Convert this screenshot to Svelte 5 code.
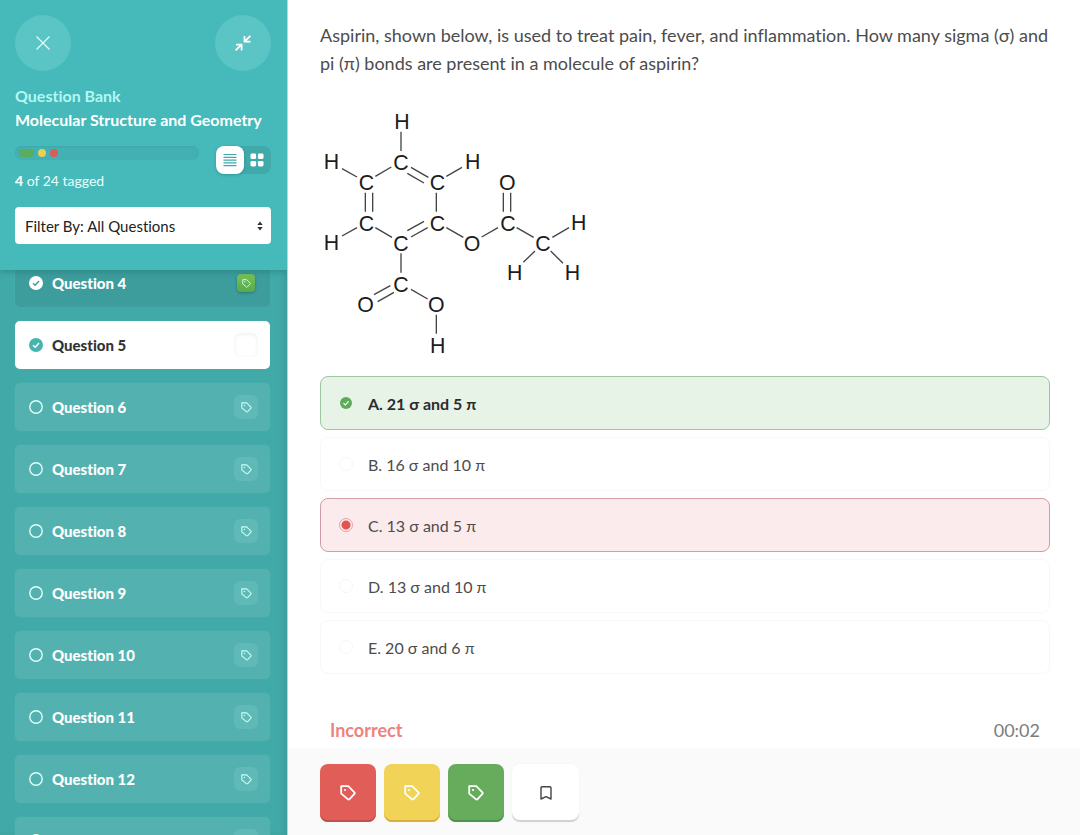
<script>
  const questions = [
    { num: 4, status: "done", tag: "green" },
    { num: 5, status: "current", tag: "blank" },
    { num: 6 },
    { num: 7 },
    { num: 8 },
    { num: 9 },
    { num: 10 },
    { num: 11 },
    { num: 12 },
    { num: 13 }
  ];

  const options = [
    { key: "A", text: "21 σ and 5 π", result: "correct" },
    { key: "B", text: "16 σ and 10 π" },
    { key: "C", text: "13 σ and 5 π", result: "wrong" },
    { key: "D", text: "13 σ and 10 π" },
    { key: "E", text: "20 σ and 6 π" }
  ];

  // [symbol, center x, baseline y]
  const atoms = [
    ["H", 276, 87], ["C", 273, 210], ["H", 64, 207], ["C", 169, 270],
    ["C", 382, 270], ["H", 488, 207], ["O", 592, 270], ["C", 169, 392],
    ["C", 382, 392], ["C", 273, 454], ["H", 64, 451], ["O", 486, 454],
    ["C", 594, 392], ["C", 699, 454], ["H", 806, 391], ["H", 614, 539],
    ["H", 787, 539], ["C", 273, 575], ["O", 167, 636], ["O", 379, 636],
    ["H", 383, 758]
  ];

  // [x1, y1, x2, y2]
  const bonds = [
    [273, 95, 273, 153], [96, 206, 141, 231], [196, 229, 244, 201],
    [303, 202, 355, 232], [292, 220, 342, 249], [409, 229, 456, 202],
    [166, 278, 166, 335], [188, 278, 188, 335], [379, 278, 379, 335],
    [96, 408, 141, 383], [196, 383, 246, 412], [303, 411, 353, 383],
    [292, 392, 342, 364], [409, 383, 460, 412], [515, 411, 564, 383],
    [580, 278, 580, 335], [602, 278, 602, 335], [620, 383, 671, 412],
    [727, 412, 777, 383], [675, 453, 640, 487], [722, 453, 759, 490],
    [273, 460, 273, 518], [192, 584, 241, 557], [203, 605, 252, 577],
    [303, 568, 353, 597], [379, 644, 379, 701]
  ];

  const tagColors = ["red", "yellow", "green"];

  let picked = $state("C");
  let view = $state("list");
</script>

{#snippet tagIcon()}
  <svg class="tag-icon" viewBox="0 0 16 16" aria-hidden="true">
    <path d="M1.2 1.2 H8.3 L14.4 7.3 Q15.2 8.1 14.4 8.9 L9.6 14.1 Q8.7 14.9 7.8 14.1 L1.2 8.6 Z" stroke-linejoin="round" />
    <circle cx="5" cy="5" r="1.1" />
  </svg>
{/snippet}

{#snippet checkIcon()}
  <svg class="check-icon" viewBox="0 0 14 14" aria-hidden="true">
    <circle cx="7" cy="7" r="7" />
    <path d="M4 7.2 L6.2 9.3 L10 5" />
  </svg>
{/snippet}

<div class="app">
  <aside class="sidebar">
    <header class="side-head">
      <div class="top-buttons">
        <button class="round" aria-label="Close">
          <svg width="16" height="16" viewBox="0 0 16 16">
            <path d="M1.5 1.5 L14.5 14.5 M14.5 1.5 L1.5 14.5" stroke="#e2fffb" stroke-width="1.2" />
          </svg>
        </button>
        <button class="round" aria-label="Collapse">
          <svg width="16" height="16" viewBox="0 0 16 16" fill="none" stroke="#fff" stroke-width="1.8">
            <path d="M15.4 0.9 L10.4 5.7 M9.5 1 V6.7 H15.5" />
            <path d="M0.6 15.4 L5.6 10.4 M1 9.6 H6.6 V15.6" />
          </svg>
        </button>
      </div>

      <p class="bank">Question Bank</p>
      <h1>Molecular Structure and Geometry</h1>

      <div class="progress-row">
        <div class="progress">
          <div class="track">
            <span class="seg green"></span>
            <span class="seg yellow"></span>
            <span class="seg red"></span>
          </div>
          <p><strong>4</strong> of 24 tagged</p>
        </div>
        <div class="toggle">
          <button class:active={view === "list"} aria-label="List view" onclick={() => (view = "list")}>
            <svg width="14" height="14" viewBox="0 0 14 14" stroke="currentColor" stroke-width="1.2">
              <path d="M0.5 1.5 H13.5 M0.5 4.3 H13.5 M0.5 7.1 H13.5 M0.5 9.9 H13.5 M0.5 12.7 H13.5" />
            </svg>
          </button>
          <button class:active={view === "grid"} aria-label="Grid view" onclick={() => (view = "grid")}>
            <svg width="14" height="14" viewBox="0 0 14 14" fill="currentColor">
              <rect x="0.5" y="0.5" width="5.6" height="5.6" rx="1.4" />
              <rect x="7.9" y="0.5" width="5.6" height="5.6" rx="1.4" />
              <rect x="0.5" y="7.9" width="5.6" height="5.6" rx="1.4" />
              <rect x="7.9" y="7.9" width="5.6" height="5.6" rx="1.4" />
            </svg>
          </button>
        </div>
      </div>

      <div class="filter">
        <select aria-label="Filter questions">
          <option>Filter By: All Questions</option>
          <option>Filter By: Tagged</option>
        </select>
        <svg width="6" height="10" viewBox="0 0 6 10" aria-hidden="true">
          <path d="M3 0.5 L5.7 4 H0.3 Z M3 9.5 L0.3 6 H5.7 Z" fill="#333" />
        </svg>
      </div>
    </header>

    <ul class="list">
      {#each questions as q (q.num)}
        <li class={q.status ?? "todo"}>
          <button class="question">
            {#if q.status}
              {@render checkIcon()}
            {:else}
              <svg class="ring" viewBox="0 0 14 14" aria-hidden="true">
                <circle cx="7" cy="7" r="6.2" />
              </svg>
            {/if}
            Question {q.num}
          </button>
          <button class="tag {q.tag ?? ''}" aria-label="Tag question {q.num}">
            {#if q.tag !== "blank"}
              {@render tagIcon()}
            {/if}
          </button>
        </li>
      {/each}
    </ul>
  </aside>

  <main>
    <section class="content">
      <p class="prompt">
        Aspirin, shown below, is used to treat pain, fever, and inflammation. How many sigma (σ) and pi (π) bonds are present in a molecule of aspirin?
      </p>

      <svg class="molecule" viewBox="30 0 810 780" role="img" aria-label="Aspirin molecule">
        {#each bonds as [x1, y1, x2, y2]}
          <line {x1} {y1} {x2} {y2} />
        {/each}
        {#each atoms as [symbol, x, y]}
          <text {x} {y}>{symbol}</text>
        {/each}
      </svg>

      <div class="options" role="radiogroup" aria-label="Answers">
        {#each options as o (o.key)}
          <label class="option {o.result ?? ''}">
            <span class="mark">
              <input type="radio" name="answer" value={o.key} bind:group={picked} />
              {#if o.result === "correct"}
                {@render checkIcon()}
              {/if}
            </span>
            <span>{o.key}. {o.text}</span>
          </label>
        {/each}
      </div>
    </section>

    <div class="result">
      <strong>Incorrect</strong>
      <span>00:02</span>
    </div>

    <footer>
      {#each tagColors as color}
        <button class="big {color}" aria-label="Tag {color}">
          {@render tagIcon()}
        </button>
      {/each}
      <button class="big bookmark" aria-label="Bookmark">
        <svg width="12" height="14" viewBox="0 0 12 14" fill="none" stroke="#444" stroke-width="1.4">
          <path d="M1 2 Q1 0.8 2.2 0.8 H9.8 Q11 0.8 11 2 V13 L6 10.6 L1 13 Z" stroke-linejoin="round" />
        </svg>
      </button>
    </footer>
  </main>
</div>

<style>
  :global(body) {
    margin: 0;
    background: #fff;
    font-family: Lato, "Open Sans", sans-serif;
    font-variant-ligatures: none;
  }

  p, h1, ul {
    margin: 0;
    padding: 0;
  }

  button {
    border: 0;
    padding: 0;
    background: none;
    font: inherit;
    font-variant-ligatures: none;
    color: inherit;
    cursor: pointer;
    display: flex;
    align-items: center;
    justify-content: center;
  }

  .app {
    display: flex;
    height: 100vh;
    overflow: hidden;
  }

  .sidebar {
    flex: 0 0 288px;
    display: flex;
    flex-direction: column;
    background: #41aaa8;
    color: #fff;
    box-shadow: inset -4px 0 6px -2px #3a9999;
    border-right: 1px solid #a9dcdc;
    box-sizing: border-box;
    overflow: hidden;
  }

  .side-head {
    position: relative;
    z-index: 1;
    padding: 15px 16px 26px 15px;
    background: #46b9bb;
    box-shadow: 0 2px 6px rgba(20, 90, 90, 0.35);
  }

  .top-buttons {
    display: flex;
    justify-content: space-between;
    margin-bottom: 13px;
  }

  .round {
    width: 56px;
    height: 56px;
    border-radius: 50%;
    background: #5bc4c4;
  }

  .bank, h1 {
    font-size: 16px;
    line-height: 24px;
    font-weight: 700;
    white-space: nowrap;
  }

  .bank {
    color: #b4f7f1;
  }

  .progress-row {
    display: flex;
    gap: 17px;
    margin-top: 14px;
    margin-bottom: 16px;
  }

  .progress {
    flex: 1;
  }

  .track {
    display: flex;
    align-items: center;
    gap: 4px;
    height: 14px;
    padding: 0 4px;
    border-radius: 7px;
    background: #43b1b3;
    box-shadow: inset 0 1px 2px #3fa7a9;
  }

  .seg {
    width: 8px;
    height: 8px;
    border-radius: 4px;
  }

  .seg.green {
    width: 15px;
    background: #5aad5a;
  }

  .seg.yellow {
    background: #e8cf55;
  }

  .seg.red {
    background: #dd5c56;
  }

  .progress p {
    margin-top: 11px;
    font-size: 14px;
    line-height: 20px;
    color: #e9fffc;
  }

  .progress strong {
    font-weight: 900;
  }

  .toggle {
    display: flex;
    align-self: flex-start;
    width: 55px;
    height: 28px;
    border-radius: 8px;
    background: #40a9aa;
  }

  .toggle button {
    flex: 1;
    border-radius: 8px;
    color: #fff;
  }

  .toggle button.active {
    background: #fff;
    color: #40a9aa;
    box-shadow: 0 1px 3px rgba(0, 80, 80, 0.3);
  }

  .filter {
    position: relative;
  }

  .filter select {
    display: block;
    width: 100%;
    height: 37px;
    padding: 0 10px;
    border: 0;
    border-radius: 4px;
    appearance: none;
    background: #fff;
    color: #222;
    font: inherit;
    font-size: 15px;
  }

  .filter svg {
    position: absolute;
    right: 8px;
    top: 14px;
    pointer-events: none;
  }

  /* the list is scrolled a little under the header */
  .list {
    list-style: none;
    display: flex;
    flex-direction: column;
    gap: 14px;
    margin-top: -11px;
    padding: 0 17px 0 15px;
  }

  li {
    flex: none;
    display: flex;
    align-items: center;
    height: 48px;
    padding-right: 12px;
    border-radius: 5px;
    background: #53b2b0;
    box-shadow: 0 0 2px #4db0ae;
  }

  li.done {
    background: #3d9d9d;
  }

  li.current {
    background: #fff;
    color: #333;
  }

  .question {
    flex: 1;
    height: 100%;
    justify-content: flex-start;
    gap: 9px;
    padding-left: 14px;
    font-size: 15px;
    font-weight: 900;
  }

  .ring,
  .check-icon {
    width: 14px;
    height: 14px;
  }

  .ring circle {
    fill: none;
    stroke: #e0fffb;
    stroke-width: 1.4;
  }

  .check-icon circle {
    fill: #fff;
  }

  .check-icon path {
    fill: none;
    stroke: #3d9d9d;
    stroke-width: 1.4;
  }

  .current .check-icon circle {
    fill: #46b5b0;
  }

  .current .check-icon path {
    stroke: #fff;
  }

  .tag {
    width: 24px;
    height: 24px;
    border-radius: 6px;
    background: #5fb9b7;
  }

  .tag.green {
    width: 18px;
    height: 18px;
    margin-right: 3px;
    border-radius: 4px;
    background: linear-gradient(#78c257, #57a94c);
    box-shadow: 0 1px 3px rgba(0, 60, 50, 0.4);
  }

  .tag.blank {
    background: #fff;
    box-shadow: inset 0 1px 4px #eee;
  }

  .tag-icon {
    width: 11px;
    height: 11px;
    fill: none;
    stroke: #c9fff8;
    stroke-width: 1.6;
  }

  .tag-icon circle {
    fill: #c9fff8;
    stroke: none;
  }

  .tag.green .tag-icon {
    width: 9px;
    height: 9px;
  }

  main {
    flex: 1;
    min-width: 0;
    display: flex;
    flex-direction: column;
    overflow: hidden;
  }

  .content {
    flex: 1;
    min-height: 0;
    padding: 21px 30px 0 32px;
  }

  .prompt {
    font-size: 18px;
    line-height: 28px;
    color: #4c4c4c;
  }

  .molecule {
    display: block;
    width: 270px;
    margin: 23px 0 16px;
  }

  .molecule line {
    stroke: #444;
    stroke-width: 4;
  }

  .molecule text {
    font-family: "Liberation Sans", Arial, sans-serif;
    font-size: 64px;
    text-anchor: middle;
    fill: #1c1c1c;
  }

  .options {
    display: flex;
    flex-direction: column;
    gap: 7px;
  }

  .option {
    display: flex;
    align-items: center;
    gap: 15px;
    height: 54px;
    box-sizing: border-box;
    padding: 0 18px;
    border: 1px solid #f8f8f8;
    border-radius: 8px;
    font-size: 16px;
    color: #4c4c4c;
  }

  .option.correct {
    background: #e8f3e8;
    border-color: #9dc79f;
    color: #2c2c2c;
    font-weight: 700;
  }

  .option.wrong {
    background: #fcebed;
    border-color: #cf9da3;
  }

  .mark {
    position: relative;
    display: flex;
    width: 14px;
    height: 14px;
  }

  .mark input {
    appearance: none;
    width: 14px;
    height: 14px;
    margin: 0;
    border: 1px solid #f6f6f6;
    border-radius: 50%;
  }

  .mark input:checked {
    border-color: #e9a3a3;
    background: radial-gradient(#e05552 4px, #fcebed 5px);
  }

  .correct .mark input {
    border: 0;
  }

  .mark .check-icon {
    position: absolute;
    inset: 1px;
    width: 12px;
    height: 12px;
    pointer-events: none;
  }

  .mark .check-icon circle {
    fill: #5dac5b;
  }

  .mark .check-icon path {
    stroke: #fff;
  }

  .result {
    display: flex;
    justify-content: space-between;
    padding: 0 40px 8px 42px;
    font-size: 18px;
    line-height: 20px;
    color: #7c7c7c;
  }

  .result strong {
    color: #ee827e;
    font-weight: 700;
  }

  footer {
    display: flex;
    gap: 8px;
    padding: 16px 32px 13px;
    background: #fafafa;
  }

  .big {
    width: 56px;
    height: 58px;
    border-radius: 8px;
  }

  .big .tag-icon {
    width: 16px;
    height: 16px;
    stroke: #fff;
    stroke-width: 1.8;
  }

  .big .tag-icon circle {
    fill: #fff;
  }

  .big.red {
    background: #e05d58;
    box-shadow: inset 0 -2px #c04f4d;
  }

  .big.yellow {
    background: #f0d357;
    box-shadow: inset 0 -2px #dcae3c;
  }

  .big.green {
    background: #67ab5d;
    box-shadow: inset 0 -2px #4d944d;
  }

  .big.bookmark {
    width: 67px;
    background: #fff;
    box-shadow: inset 0 -2px #d2d2d6, 0 0 2px #eee;
  }
</style>
